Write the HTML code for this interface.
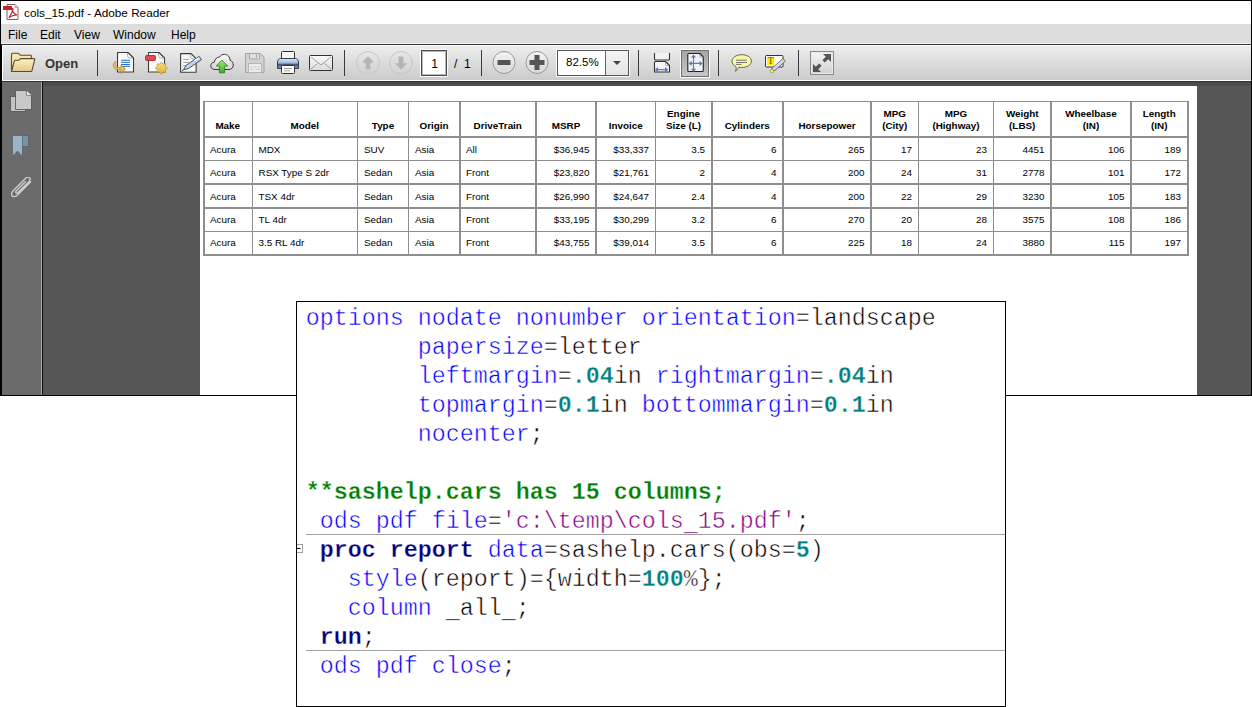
<!DOCTYPE html>
<html><head><meta charset="utf-8">
<style>
*{margin:0;padding:0;box-sizing:border-box}
html,body{width:1252px;height:707px;overflow:hidden;background:#fff;position:relative;font-family:"Liberation Sans",sans-serif}
.a{position:absolute}
#win{position:absolute;left:0;top:0;width:1252px;height:396px;background:#000;overflow:hidden}
#title{position:absolute;left:1px;top:1px;width:1250px;height:23px;background:#fff}
#title .t{position:absolute;left:23px;top:5px;font-size:11.75px;color:#000;white-space:nowrap}
#menu{position:absolute;left:1px;top:24px;width:1250px;height:20px;background:#dddddd;border-bottom:1px solid #f4f4f4}
#menu span{position:absolute;top:4px;font-size:12px;color:#000}
#tb{position:absolute;left:2px;top:45px;width:1249px;height:36px;border-left:1px solid #fff;background:linear-gradient(#ededed,#cbcbcb);border-top:1px solid #fff;border-bottom:1px solid #fff}
#mline{position:absolute;left:1px;top:44px;width:1250px;height:1px;background:#363636}
.sep{position:absolute;top:5px;width:1px;height:26px;background:#3a3a3a}
#side{position:absolute;left:2px;top:82px;width:39px;height:313px;background:#6b6b6b}
#sdiv{position:absolute;left:41px;top:82px;width:2px;height:313px;background:#111;border-left:1px solid #a8a8a8}
#main{position:absolute;left:43px;top:82px;width:1208px;height:313px;background:#565656}
#tbl{position:absolute;left:1px;top:81px;width:1250px;height:1px;background:#333}
#page{position:absolute;left:200px;top:86px;width:997px;height:309px;background:#fff}
.gl{position:absolute;background:#8e8e8e}
.th,.td{position:absolute;font-size:9.9px;line-height:11px;white-space:nowrap;color:#000}
.th{font-weight:bold;text-align:center}
.td.r{text-align:right}
#code{position:absolute;left:296px;top:301px;width:710px;height:406px;background:#fff;border:1px solid #000;overflow:hidden}
.cl{position:absolute;left:8.7px;-webkit-text-stroke:0.5px #fff;font-family:"Liberation Mono",monospace;font-size:23.333px;line-height:29px;white-space:pre;color:#000}
.csep{position:absolute;left:9px;width:700px;height:1px;background:#a0a0a0}
</style></head><body>
<div id="win">
 <div id="title">
  <svg class="a" style="left:1px;top:2px" width="18" height="18" viewBox="0 0 18 18">
   <path d="M5 1.5h8l3 3v12H5z" fill="#fff" stroke="#8c5a5a" stroke-width="1"/>
   <path d="M13 1.5v3h3" fill="#ddd" stroke="#999" stroke-width="0.8"/>
   <rect x="1" y="3" width="9" height="4" fill="#c8202a"/>
   <path d="M7 15c2-4 4-7 4-9 0-1-1-1-1 0 0 2 2 5 5 6-3 0-6 1-8 3" fill="none" stroke="#c8202a" stroke-width="1.2"/>
  </svg>
  <div class="t">cols_15.pdf - Adobe Reader</div>
 </div>
 <div id="mline"></div>
 <div id="menu">
  <span style="left:7px">File</span><span style="left:39px">Edit</span><span style="left:73px">View</span><span style="left:112px">Window</span><span style="left:170px">Help</span>
 </div>
 <div id="tb"><div class="a" style="left:-2px;top:-1px;width:1250px;height:36px">
  <!-- folder -->
  <svg class="a" style="left:9px;top:6px" width="27" height="23" viewBox="0 0 27 23">
   <defs><linearGradient id="fg" x1="0" y1="0" x2="0" y2="1"><stop offset="0" stop-color="#fdf2c4"/><stop offset="1" stop-color="#e2c886"/></linearGradient></defs>
   <path d="M1.5 20.4V3.3q0-1 1-1H8.5l2 2H20.5q0.8 0 0.8 0.8V12H4z" fill="#f8e6a8" stroke="#5a4a38" stroke-width="1.1" stroke-linejoin="round"/>
   <path d="M1.6 20.4L4.4 9.8q0.2-0.6 0.8-0.6H9l1.6-1.6H24q0.9 0 0.7 0.9L21.9 19.8q-0.2 0.7-0.9 0.7H2.2q-0.8 0-0.6-0.1z" fill="url(#fg)" stroke="#5a4a38" stroke-width="1.1" stroke-linejoin="round"/>
  </svg>
  <div class="a" style="left:44px;top:11px;font-size:13px;font-weight:bold;color:#333">Open</div>
  <div class="sep" style="left:96px"></div>
  <!-- icon1 doc with arrow -->
  <svg class="a" style="left:111px;top:6px" width="24" height="24" viewBox="0 0 24 24">
   <defs><linearGradient id="yg" x1="0" y1="0" x2="0" y2="1"><stop offset="0" stop-color="#fbe27a"/><stop offset="1" stop-color="#e0a830"/></linearGradient></defs>
   <path d="M5.5 1.5h10.5l5.5 5.5v14h-16z" fill="#f8f8f8" stroke="#3c3c3c" stroke-width="1.1" stroke-linejoin="round"/>
   <path d="M15.5 2v2.5c0 1.5 1 2.5 2.5 2.5h3" fill="none" stroke="#9a9a9a" stroke-width="0.8"/>
   <path d="M9 9.3h9M9 11.4h9M9 13.5h9M9 15.4h9M9 17.4h4" stroke="#2a6fd6" stroke-width="1"/>
   <path d="M3.5 10.5C0 12.5 0.5 18.5 6.5 19h2.5v3.5l4.5-4.5-4.5-4v2.5h-2.5c-2.5 0-4-2-3-6z" fill="url(#yg)" stroke="#a87818" stroke-width="0.7"/>
  </svg>
  <!-- icon2 -->
  <svg class="a" style="left:144px;top:6px" width="24" height="24" viewBox="0 0 24 24">
   <path d="M3.5 1.5h10.5l5.5 5.5v14h-16z" fill="#f8f8f8" stroke="#3c3c3c" stroke-width="1.1" stroke-linejoin="round"/>
   <path d="M13.5 2v2.5c0 1.5 1 2.5 2.5 2.5h3" fill="none" stroke="#9a9a9a" stroke-width="0.8"/>
   <rect x="0.5" y="4.5" width="10" height="5" rx="1" fill="#e8444e" stroke="#9c2030" stroke-width="0.8"/>
   <polygon points="16.4,11.0 18.0,13.2 20.8,12.8 20.4,15.6 22.6,17.2 20.4,18.8 20.8,21.6 18.0,21.2 16.4,23.4 14.8,21.2 12.0,21.6 12.4,18.8 10.2,17.2 12.4,15.6 12.0,12.8 14.8,13.2" fill="url(#yg)" stroke="#b88a20" stroke-width="0.6"/>
  </svg>
  <!-- icon3 doc with pen -->
  <svg class="a" style="left:179px;top:6px" width="24" height="24" viewBox="0 0 24 24">
   <path d="M0.6 2.6h10.5l5 5v13.6h-15.5z" fill="#f8f8f8" stroke="#3c3c3c" stroke-width="1.1" stroke-linejoin="round"/>
   <path d="M10.6 3v2.5c0 1.5 1 2.5 2.5 2.5h3" fill="none" stroke="#9a9a9a" stroke-width="0.8"/>
   <path d="M3.2 8.5h5.6M3.2 11.5h5.6M3.2 14.5h3.5" stroke="#9a9a9a" stroke-width="0.9"/>
   <path d="M3.7 18.5L5.86 14.56L19.16 5.36L21.44 8.64L8.14 17.84Z" fill="#bcd6f0" stroke="#34445a" stroke-width="0.9" stroke-linejoin="round"/>
   <path d="M14.5 9.8L18.8 6.8" stroke="#fff" stroke-width="1.3"/>
   <path d="M1.8 20.2l2-1.6" stroke="#222" stroke-width="0.9"/>
  </svg>
  <!-- icon4 cloud -->
  <svg class="a" style="left:209px;top:8px" width="25" height="22" viewBox="0 0 25 22">
   <defs><linearGradient id="clg" x1="0" y1="0" x2="0" y2="1"><stop offset="0" stop-color="#fafafa"/><stop offset="1" stop-color="#d4d4d4"/></linearGradient>
   <linearGradient id="grg" x1="0" y1="0" x2="0" y2="1"><stop offset="0" stop-color="#a0ec70"/><stop offset="1" stop-color="#40a830"/></linearGradient></defs>
   <path d="M5 16.5C2 16.5 0.8 14.5 0.8 12.8C0.8 10.8 2.3 9.3 4.3 9.2C4.8 6 7 4 9.5 4C10.8 2 12.5 1.3 14.3 1.3C17.8 1.3 20 4 20 7.3C22 8 23.3 9.8 23.3 12C23.3 14.6 21.4 16.5 19 16.5Z" fill="url(#clg)" stroke="#3a3a3a" stroke-width="1"/>
   <path d="M12 7.3L17.8 13H14.6V19.8H9.4V13H6.2Z" fill="url(#grg)" stroke="#2a7a1a" stroke-width="0.8" stroke-linejoin="round"/>
  </svg>
  <!-- icon5 floppy (disabled) -->
  <svg class="a" style="left:243px;top:7px" width="22" height="22" viewBox="0 0 22 22">
   <path d="M1.5 1.5h15l3.5 3.5v15.5h-18.5z" fill="#d2d2d2" stroke="#a4a4a4" stroke-linejoin="round"/>
   <rect x="5.5" y="1.5" width="10" height="5.5" rx="1" fill="#e0e0e0" stroke="#a4a4a4"/>
   <path d="M12.5 2.5v3" stroke="#a4a4a4" stroke-width="1.2"/>
   <rect x="4.5" y="11.5" width="13" height="9" fill="#ececec" stroke="#b4b4b4"/>
   <path d="M6 15h2M9 15h3M13 15h3M6 17.5h3M10 17.5h1M12 17.5h4" stroke="#c0c0c0" stroke-width="0.8"/>
  </svg>
  <!-- icon6 printer -->
  <svg class="a" style="left:275px;top:5px" width="25" height="25" viewBox="0 0 25 25">
   <defs><linearGradient id="prg" x1="0" y1="0" x2="0" y2="1"><stop offset="0" stop-color="#dfeaf6"/><stop offset="0.45" stop-color="#9ab8dc"/><stop offset="0.6" stop-color="#4a5870"/><stop offset="1" stop-color="#7f9fc4"/></linearGradient></defs>
   <rect x="5.5" y="1.5" width="13" height="9" rx="1" fill="#f6f6f6" stroke="#333"/>
   <path d="M1.5 12c0-2 1.5-3.5 3-3.5h15c1.5 0 3 1.5 3 3.5v6.5h-21z" fill="url(#prg)" stroke="#33404f"/>
   <rect x="5.5" y="15.5" width="13" height="8" rx="1" fill="#fafafa" stroke="#333"/>
   <path d="M8 18.5h8M8 20.8h6" stroke="#8a8a8a" stroke-width="0.8"/>
  </svg>
  <!-- icon7 envelope -->
  <svg class="a" style="left:307px;top:9px" width="26" height="18" viewBox="0 0 26 18">
   <defs><linearGradient id="evg" x1="0" y1="0" x2="0" y2="1"><stop offset="0" stop-color="#fafafa"/><stop offset="1" stop-color="#dcdcdc"/></linearGradient></defs>
   <rect x="1.5" y="1.5" width="23" height="15" rx="1" fill="url(#evg)" stroke="#333"/>
   <path d="M3 3l10 8 10-8M3 15l6.5-5.5M23 15l-6.5-5.5" fill="none" stroke="#888" stroke-width="0.8"/>
  </svg>
  <div class="sep" style="left:343px"></div>
  <!-- up/down circles -->
  <svg class="a" style="left:354px;top:5px" width="26" height="26" viewBox="0 0 26 26">
   <circle cx="13" cy="12.8" r="11.3" fill="none" stroke="#c6c6c6"/>
   <path d="M13 6.3l6.2 6.2h-3.8v6.8h-4.8v-6.8h-3.8z" fill="#b4b4b4"/>
  </svg>
  <svg class="a" style="left:387px;top:5px" width="26" height="26" viewBox="0 0 26 26">
   <circle cx="13" cy="12.8" r="11.3" fill="none" stroke="#c6c6c6"/>
   <path d="M13 19.5l6.2-6.2h-3.8v-6.8h-4.8v6.8h-3.8z" fill="#b4b4b4"/>
  </svg>
  <div class="a" style="left:419px;top:4px;width:28px;height:28px;background:#fff;border:1px solid #fafafa;box-shadow:inset 0 0 0 1px #4a4a4a, inset 0 0 0 2px #b8b8b8"></div>
  <div class="a" style="left:420px;top:12px;width:27px;text-align:center;font-size:12px;color:#000">1</div>
  <div class="a" style="left:453px;top:12px;font-size:12px;color:#000">/ &nbsp;1</div>
  <div class="sep" style="left:480px"></div>
  <!-- minus / plus -->
  <svg class="a" style="left:490px;top:5px" width="26" height="26" viewBox="0 0 26 26">
   <defs><linearGradient id="cg" x1="0" y1="0" x2="0" y2="1"><stop offset="0" stop-color="#f4f4f4"/><stop offset="1" stop-color="#d8d8d8"/></linearGradient></defs>
   <circle cx="13" cy="12.5" r="11" fill="url(#cg)" stroke="#8e8e8e" stroke-width="0.9"/>
   <rect x="6.5" y="10" width="13" height="5" fill="#555"/>
  </svg>
  <svg class="a" style="left:523px;top:5px" width="26" height="26" viewBox="0 0 26 26">
   <circle cx="13" cy="12.5" r="11" fill="url(#cg)" stroke="#8e8e8e" stroke-width="0.9"/>
   <rect x="5.5" y="10" width="15" height="5" fill="#555"/><rect x="10.5" y="5" width="5" height="15" fill="#555"/>
  </svg>
  <div class="a" style="left:556px;top:5px;width:72px;height:26px;background:#fff;border:1px solid #555;box-shadow:0 0 0 1px #f8f8f8"></div>
  <div class="a" style="left:604px;top:6px;width:23px;height:24px;background:linear-gradient(#f4f4f4,#e4e4e4);border-left:1px solid #666"></div>
  <svg class="a" style="left:610px;top:15px" width="12" height="6" viewBox="0 0 12 6"><path d="M2 1h8l-4 4z" fill="#444"/></svg>
  <div class="a" style="left:565px;top:11px;font-size:11.5px;color:#000">82.5%</div>
  <div class="sep" style="left:637px"></div>
  <!-- fit width -->
  <svg class="a" style="left:652px;top:6px" width="19" height="23" viewBox="0 0 19 23">
   <path d="M1.5 2v6q0 1 1 1h13q1 0 1-1v-6" fill="#f2f2f2" stroke="#333" stroke-width="1.1"/>
   <path d="M1.5 21v-9.5q0-1 1-1h10l4 4v6.5z" fill="#f4f4f4" stroke="#333" stroke-width="1.1" stroke-linejoin="round"/>
   <path d="M12.5 11v2.5q0 1 1 1h2.5" fill="none" stroke="#999" stroke-width="0.8"/>
   <path d="M3 18.7h11" stroke="#5a78c0" stroke-width="1.2"/>
   <path d="M1.8 18.7l3.2-2.7v5.4z M15.2 18.7l-3.2-2.7v5.4z" fill="#5a78c0"/>
  </svg>
  <!-- fit page pressed -->
  <div class="a" style="left:680px;top:5px;width:28px;height:27px;background:linear-gradient(#a6a6a6,#c6c6c6);border:1px solid #6e6e6e;box-shadow:0 0 0 1px #fff"></div>
  <svg class="a" style="left:686px;top:7px" width="18" height="22" viewBox="0 0 18 22">
   <path d="M0.8 2.5q0-1 1-1h11l3.5 3.5v13.5q0 1-1 1h-13.5q-1 0-1-1z" fill="#f2f2f2" stroke="#222" stroke-width="1.1" stroke-linejoin="round"/>
   <path d="M12.8 2v2.2q0 1 1 1h2.5" fill="none" stroke="#999" stroke-width="0.8"/>
   <path d="M6.5 4.5v13M3.5 11.4h10" stroke="#5a78c0" stroke-width="1.1"/>
   <path d="M6.5 2.5l-2.6 3h5.2z M6.5 19.8l-2.6-3h5.2z M1.6 11.4l3-2.6v5.2z M15.6 11.4l-3-2.6v5.2z" fill="#5a78c0"/>
  </svg>
  <div class="sep" style="left:717px"></div>
  <!-- speech bubble -->
  <svg class="a" style="left:730px;top:8px" width="22" height="20" viewBox="0 0 22 20">
   <path d="M5 13.5C2.3 12.3 1 10.3 1 8.1C1 4.5 5.3 1.7 10.7 1.7C16.1 1.7 20.4 4.5 20.4 8.1C20.4 11.7 16.1 14.5 10.7 14.5C9.7 14.5 8.7 14.4 7.8 14.2C6.8 16 5.5 17.5 4.5 18.3C5.2 16.8 5.4 15 5 13.5Z" fill="#fbf7a8" stroke="#555" stroke-width="0.9"/>
   <path d="M5 7.2h11M5 9.5h11M5 11.4h5.5" stroke="#666" stroke-width="0.9"/>
  </svg>
  <!-- T pen -->
  <svg class="a" style="left:763px;top:8px" width="23" height="21" viewBox="0 0 23 21">
   <rect x="1.5" y="2.5" width="17.5" height="11.5" rx="1" fill="#fff" stroke="#333"/>
   <rect x="3" y="4" width="7.2" height="8.3" fill="#ffee00"/>
   <text x="6.6" y="11.3" font-family="Liberation Serif" font-size="9.5" text-anchor="middle" fill="#6b4e00">T</text>
   <path d="M7.3 18.3L8.61 14.66L19.01 5.46L21.39 8.14L10.99 17.34Z" fill="#d8d8d8" stroke="#555" stroke-width="0.8" stroke-linejoin="round"/>
   <circle cx="8" cy="18" r="1.8" fill="#f0e890" stroke="#9a9a20" stroke-width="0.7"/>
  </svg>
  <div class="sep" style="left:797px"></div>
  <!-- expand -->
  <div class="a" style="left:809px;top:6px;width:24px;height:24px;background:linear-gradient(#f6f6f6,#d0d0d0);border:1px solid #8a8a8a;box-shadow:inset 0 0 0 1px #e8e8e8"></div>
  <svg class="a" style="left:811px;top:8px" width="20" height="20" viewBox="0 0 20 20">
   <path d="M19 1v8l-2.8-2.8-3.4 3.4-2.4-2.4 3.4-3.4-2.8-2.8z M1 19v-8l2.8 2.8 3.4-3.4 2.4 2.4-3.4 3.4 2.8 2.8z" fill="#555"/>
  </svg>
 </div></div>
 <div id="side">
  <svg class="a" style="left:8px;top:8px" width="23" height="23" viewBox="0 0 23 23">
   <path d="M0.5 6.5h15v15h-15z" fill="#c4c4c4" stroke="#505050" stroke-width="0.8"/>
   <path d="M5.5 0.5h11l5 5v14h-16z" fill="#c8c8c8" stroke="#505050" stroke-width="0.8"/>
   <path d="M16.5 0.5v5h5" fill="#eee" stroke="#505050" stroke-width="0.6"/>
  </svg>
  <svg class="a" style="left:9px;top:52px" width="19" height="24" viewBox="0 0 19 24">
   <path d="M9 1.5h8.5v11h-8.5z" fill="#7893a5" stroke="#4a5560" stroke-width="0.6"/>
   <path d="M1.5 1.5h10v21l-5-5.5-5 5.5z" fill="#9db3c3" stroke="#4a5560" stroke-width="0.6"/>
  </svg>
  <svg class="a" style="left:7px;top:95px" width="25" height="25" viewBox="0 0 25 25">
   <path d="M22 4.5l-13.5 13.5c-1.8 1.8-4.3 2-5.3 1s-.8-3.5 1-5.3l12.5-12.5c1.2-1.2 3-1.3 3.8-.5s.7 2.6-.5 3.8l-11 11c-.7.7-1.7.8-2.1.4s-.3-1.4.4-2.1l9.5-9.5" fill="none" stroke="#cfcfcf" stroke-width="1.3"/>
  </svg>
 </div>
 <div id="sdiv"></div>
 <div id="main"><div class="a" style="left:0;top:0;width:1208px;height:4px;background:linear-gradient(#474747,#505050)"></div></div><div id="tbl"></div>
 <div id="page"></div>
 <div class="a" style="left:0;top:0;width:1252px;height:396px">
<div class="gl" style="left:203px;top:101px;width:2px;height:155px"></div>
<div class="gl" style="left:252px;top:101px;width:1px;height:155px"></div>
<div class="gl" style="left:357px;top:101px;width:1px;height:155px"></div>
<div class="gl" style="left:408px;top:101px;width:1px;height:155px"></div>
<div class="gl" style="left:459px;top:101px;width:2px;height:155px"></div>
<div class="gl" style="left:535px;top:101px;width:2px;height:155px"></div>
<div class="gl" style="left:595px;top:101px;width:2px;height:155px"></div>
<div class="gl" style="left:655px;top:101px;width:1px;height:155px"></div>
<div class="gl" style="left:711px;top:101px;width:2px;height:155px"></div>
<div class="gl" style="left:782px;top:101px;width:2px;height:155px"></div>
<div class="gl" style="left:870px;top:101px;width:2px;height:155px"></div>
<div class="gl" style="left:918px;top:101px;width:1px;height:155px"></div>
<div class="gl" style="left:993px;top:101px;width:1px;height:155px"></div>
<div class="gl" style="left:1050px;top:101px;width:2px;height:155px"></div>
<div class="gl" style="left:1130px;top:101px;width:2px;height:155px"></div>
<div class="gl" style="left:1187px;top:101px;width:2px;height:155px"></div>
<div class="gl" style="left:203px;top:101px;width:986px;height:1px"></div>
<div class="gl" style="left:203px;top:136px;width:986px;height:2px"></div>
<div class="gl" style="left:203px;top:160px;width:986px;height:1px"></div>
<div class="gl" style="left:203px;top:183px;width:986px;height:2px"></div>
<div class="gl" style="left:203px;top:207px;width:986px;height:2px"></div>
<div class="gl" style="left:203px;top:231px;width:986px;height:1px"></div>
<div class="gl" style="left:203px;top:254px;width:986px;height:2px"></div>
<div class="th" style="left:203.5px;width:48.5px;top:119.86px">Make</div>
<div class="th" style="left:252px;width:105.5px;top:119.86px">Model</div>
<div class="th" style="left:357.5px;width:51.0px;top:119.86px">Type</div>
<div class="th" style="left:408.5px;width:51.0px;top:119.86px">Origin</div>
<div class="th" style="left:459.5px;width:76.5px;top:119.86px">DriveTrain</div>
<div class="th" style="left:536px;width:60px;top:119.86px">MSRP</div>
<div class="th" style="left:596px;width:59.5px;top:119.86px">Invoice</div>
<div class="th" style="left:655.5px;width:56.0px;top:107.86px">Engine</div>
<div class="th" style="left:655.5px;width:56.0px;top:119.86px">Size (L)</div>
<div class="th" style="left:711.5px;width:71.5px;top:119.86px">Cylinders</div>
<div class="th" style="left:783px;width:88px;top:119.86px">Horsepower</div>
<div class="th" style="left:871px;width:47.5px;top:107.86px">MPG</div>
<div class="th" style="left:871px;width:47.5px;top:119.86px">(City)</div>
<div class="th" style="left:918.5px;width:75.0px;top:107.86px">MPG</div>
<div class="th" style="left:918.5px;width:75.0px;top:119.86px">(Highway)</div>
<div class="th" style="left:993.5px;width:57.5px;top:107.86px">Weight</div>
<div class="th" style="left:993.5px;width:57.5px;top:119.86px">(LBS)</div>
<div class="th" style="left:1051px;width:80px;top:107.86px">Wheelbase</div>
<div class="th" style="left:1051px;width:80px;top:119.86px">(IN)</div>
<div class="th" style="left:1131px;width:56.5px;top:107.86px">Length</div>
<div class="th" style="left:1131px;width:56.5px;top:119.86px">(IN)</div>
<div class="td" style="left:210.0px;top:143.96px">Acura</div>
<div class="td" style="left:258.5px;top:143.96px">MDX</div>
<div class="td" style="left:364.0px;top:143.96px">SUV</div>
<div class="td" style="left:415.0px;top:143.96px">Asia</div>
<div class="td" style="left:466.0px;top:143.96px">All</div>
<div class="td r" style="left:536px;width:53.5px;top:143.96px">$36,945</div>
<div class="td r" style="left:596px;width:53.0px;top:143.96px">$33,337</div>
<div class="td r" style="left:655.5px;width:49.5px;top:143.96px">3.5</div>
<div class="td r" style="left:711.5px;width:65.0px;top:143.96px">6</div>
<div class="td r" style="left:783px;width:81.5px;top:143.96px">265</div>
<div class="td r" style="left:871px;width:41.0px;top:143.96px">17</div>
<div class="td r" style="left:918.5px;width:68.5px;top:143.96px">23</div>
<div class="td r" style="left:993.5px;width:51.0px;top:143.96px">4451</div>
<div class="td r" style="left:1051px;width:73.5px;top:143.96px">106</div>
<div class="td r" style="left:1131px;width:50.0px;top:143.96px">189</div>
<div class="td" style="left:210.0px;top:166.96px">Acura</div>
<div class="td" style="left:258.5px;top:166.96px">RSX Type S 2dr</div>
<div class="td" style="left:364.0px;top:166.96px">Sedan</div>
<div class="td" style="left:415.0px;top:166.96px">Asia</div>
<div class="td" style="left:466.0px;top:166.96px">Front</div>
<div class="td r" style="left:536px;width:53.5px;top:166.96px">$23,820</div>
<div class="td r" style="left:596px;width:53.0px;top:166.96px">$21,761</div>
<div class="td r" style="left:655.5px;width:49.5px;top:166.96px">2</div>
<div class="td r" style="left:711.5px;width:65.0px;top:166.96px">4</div>
<div class="td r" style="left:783px;width:81.5px;top:166.96px">200</div>
<div class="td r" style="left:871px;width:41.0px;top:166.96px">24</div>
<div class="td r" style="left:918.5px;width:68.5px;top:166.96px">31</div>
<div class="td r" style="left:993.5px;width:51.0px;top:166.96px">2778</div>
<div class="td r" style="left:1051px;width:73.5px;top:166.96px">101</div>
<div class="td r" style="left:1131px;width:50.0px;top:166.96px">172</div>
<div class="td" style="left:210.0px;top:190.96px">Acura</div>
<div class="td" style="left:258.5px;top:190.96px">TSX 4dr</div>
<div class="td" style="left:364.0px;top:190.96px">Sedan</div>
<div class="td" style="left:415.0px;top:190.96px">Asia</div>
<div class="td" style="left:466.0px;top:190.96px">Front</div>
<div class="td r" style="left:536px;width:53.5px;top:190.96px">$26,990</div>
<div class="td r" style="left:596px;width:53.0px;top:190.96px">$24,647</div>
<div class="td r" style="left:655.5px;width:49.5px;top:190.96px">2.4</div>
<div class="td r" style="left:711.5px;width:65.0px;top:190.96px">4</div>
<div class="td r" style="left:783px;width:81.5px;top:190.96px">200</div>
<div class="td r" style="left:871px;width:41.0px;top:190.96px">22</div>
<div class="td r" style="left:918.5px;width:68.5px;top:190.96px">29</div>
<div class="td r" style="left:993.5px;width:51.0px;top:190.96px">3230</div>
<div class="td r" style="left:1051px;width:73.5px;top:190.96px">105</div>
<div class="td r" style="left:1131px;width:50.0px;top:190.96px">183</div>
<div class="td" style="left:210.0px;top:213.96px">Acura</div>
<div class="td" style="left:258.5px;top:213.96px">TL 4dr</div>
<div class="td" style="left:364.0px;top:213.96px">Sedan</div>
<div class="td" style="left:415.0px;top:213.96px">Asia</div>
<div class="td" style="left:466.0px;top:213.96px">Front</div>
<div class="td r" style="left:536px;width:53.5px;top:213.96px">$33,195</div>
<div class="td r" style="left:596px;width:53.0px;top:213.96px">$30,299</div>
<div class="td r" style="left:655.5px;width:49.5px;top:213.96px">3.2</div>
<div class="td r" style="left:711.5px;width:65.0px;top:213.96px">6</div>
<div class="td r" style="left:783px;width:81.5px;top:213.96px">270</div>
<div class="td r" style="left:871px;width:41.0px;top:213.96px">20</div>
<div class="td r" style="left:918.5px;width:68.5px;top:213.96px">28</div>
<div class="td r" style="left:993.5px;width:51.0px;top:213.96px">3575</div>
<div class="td r" style="left:1051px;width:73.5px;top:213.96px">108</div>
<div class="td r" style="left:1131px;width:50.0px;top:213.96px">186</div>
<div class="td" style="left:210.0px;top:237.46px">Acura</div>
<div class="td" style="left:258.5px;top:237.46px">3.5 RL 4dr</div>
<div class="td" style="left:364.0px;top:237.46px">Sedan</div>
<div class="td" style="left:415.0px;top:237.46px">Asia</div>
<div class="td" style="left:466.0px;top:237.46px">Front</div>
<div class="td r" style="left:536px;width:53.5px;top:237.46px">$43,755</div>
<div class="td r" style="left:596px;width:53.0px;top:237.46px">$39,014</div>
<div class="td r" style="left:655.5px;width:49.5px;top:237.46px">3.5</div>
<div class="td r" style="left:711.5px;width:65.0px;top:237.46px">6</div>
<div class="td r" style="left:783px;width:81.5px;top:237.46px">225</div>
<div class="td r" style="left:871px;width:41.0px;top:237.46px">18</div>
<div class="td r" style="left:918.5px;width:68.5px;top:237.46px">24</div>
<div class="td r" style="left:993.5px;width:51.0px;top:237.46px">3880</div>
<div class="td r" style="left:1051px;width:73.5px;top:237.46px">115</div>
<div class="td r" style="left:1131px;width:50.0px;top:237.46px">197</div>
 </div>
</div>
<div id="code">
<div class="cl" style="top:3.28px"><span style="color:#0000ff">options nodate nonumber orientation</span><span style="color:#000000">=landscape</span></div>
<div class="cl" style="top:32.28px"><span style="color:#0000ff">        papersize</span><span style="color:#000000">=letter</span></div>
<div class="cl" style="top:61.28px"><span style="color:#0000ff">        leftmargin</span><span style="color:#000000">=</span><span style="color:#008080;font-weight:bold;-webkit-text-stroke:0.3px #fff">.04</span><span style="color:#000000">in </span><span style="color:#0000ff">rightmargin</span><span style="color:#000000">=</span><span style="color:#008080;font-weight:bold;-webkit-text-stroke:0.3px #fff">.04</span><span style="color:#000000">in</span></div>
<div class="cl" style="top:90.28px"><span style="color:#0000ff">        topmargin</span><span style="color:#000000">=</span><span style="color:#008080;font-weight:bold;-webkit-text-stroke:0.3px #fff">0.1</span><span style="color:#000000">in </span><span style="color:#0000ff">bottommargin</span><span style="color:#000000">=</span><span style="color:#008080;font-weight:bold;-webkit-text-stroke:0.3px #fff">0.1</span><span style="color:#000000">in</span></div>
<div class="cl" style="top:119.28px"><span style="color:#0000ff">        nocenter</span><span style="color:#000000">;</span></div>
<div class="cl" style="top:148.28px"></div>
<div class="cl" style="top:177.28px"><span style="color:#008000;font-weight:bold;-webkit-text-stroke:0.3px #fff">**sashelp.cars has 15 columns;</span></div>
<div class="cl" style="top:206.28px"><span style="color:#0000ff"> ods pdf file</span><span style="color:#000000">=</span><span style="color:#800080">'c:\temp\cols<span style="position:relative;top:3px">_</span>15.pdf'</span><span style="color:#000000">;</span></div>
<div class="cl" style="top:235.28px"><span style="color:#000000"> </span><span style="color:#000080;font-weight:bold;-webkit-text-stroke:0.3px #fff">proc report</span><span style="color:#000000"> </span><span style="color:#0000ff">data</span><span style="color:#000000">=sashelp.cars(obs=</span><span style="color:#008080;font-weight:bold;-webkit-text-stroke:0.3px #fff">5</span><span style="color:#000000">)</span></div>
<div class="cl" style="top:264.28px"><span style="color:#0000ff">   style</span><span style="color:#000000">(report)={width=</span><span style="color:#008080;font-weight:bold;-webkit-text-stroke:0.3px #fff">100</span><span style="color:#000000">%};</span></div>
<div class="cl" style="top:293.28px"><span style="color:#0000ff">   column</span><span style="color:#000000"> <span style="position:relative;top:3px">_</span>all<span style="position:relative;top:3px">_</span>;</span></div>
<div class="cl" style="top:322.28px"><span style="color:#000000"> </span><span style="color:#000080;font-weight:bold;-webkit-text-stroke:0.3px #fff">run</span><span style="color:#000000">;</span></div>
<div class="cl" style="top:351.28px"><span style="color:#0000ff"> ods pdf close</span><span style="color:#000000">;</span></div>
<div class="csep" style="top:232px"></div>
<div class="csep" style="top:348px"></div>
<svg class="a" style="left:-1px;top:242px" width="8" height="10" viewBox="0 0 8 10"><rect x="0.5" y="0.5" width="6" height="8" fill="#fff" stroke="#a0a0a0"/><path d="M0 4.5h4.5" stroke="#000"/></svg>
</div>
</body></html>
